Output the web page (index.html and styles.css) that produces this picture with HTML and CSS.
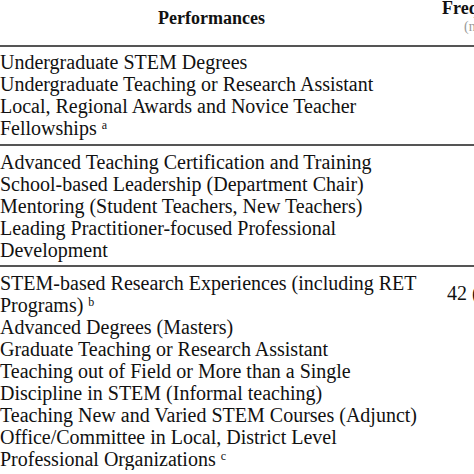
FILE: index.html
```html
<!DOCTYPE html>
<html>
<head>
<meta charset="utf-8">
<link rel="stylesheet" href="styles.css">
</head>
<body>
<div class="table">
  <div class="head">
    <div class="h-perf">Performances</div>
    <div class="h-freq">Frequency<span class="h-sub">(n)</span></div>
  </div>
  <div class="row r1">
    <div class="items">
      <div>Undergraduate STEM Degrees</div>
      <div>Undergraduate Teaching or Research Assistant</div>
      <div>Local, Regional Awards and Novice Teacher</div>
      <div>Fellowships <sup>a</sup></div>
    </div>
    <div class="freq"></div>
  </div>
  <div class="row r2">
    <div class="items">
      <div>Advanced Teaching Certification and Training</div>
      <div>School-based Leadership (Department Chair)</div>
      <div>Mentoring (Student Teachers, New Teachers)</div>
      <div>Leading Practitioner-focused Professional</div>
      <div>Development</div>
    </div>
    <div class="freq"></div>
  </div>
  <div class="row r3">
    <div class="items">
      <div>STEM-based Research Experiences (including RET</div>
      <div>Programs) <sup>b</sup></div>
      <div>Advanced Degrees (Masters)</div>
      <div>Graduate Teaching or Research Assistant</div>
      <div>Teaching out of Field or More than a Single</div>
      <div>Discipline in STEM (Informal teaching)</div>
      <div>Teaching New and Varied STEM Courses (Adjunct)</div>
      <div>Office/Committee in Local, District Level</div>
      <div>Professional Organizations <sup>c</sup></div>
    </div>
    <div class="freq f3">42 (38%)</div>
  </div>
</div>
</body>
</html>
```

FILE: styles.css
```css
html, body {
  margin: 0;
  padding: 0;
  background: #fff;
  overflow: hidden;
  width: 474px;
  height: 474px;
}
.table {
  width: 474px;
  overflow: hidden;
  font-family: "Liberation Serif", "DejaVu Serif", serif;
  color: #111;
}
.head {
  display: grid;
  grid-template-columns: 418px 1fr;
  height: 45px;
  border-bottom: 2px solid #555;
}
.h-perf {
  font-weight: bold;
  font-size: 18px;
  text-align: center;
  padding-top: 8px;
  padding-left: 5px;
}
.h-freq {
  font-weight: bold;
  font-size: 18px;
  margin-top: -2px;
  padding-left: 24px;
  display: flex;
  flex-direction: column;
  white-space: nowrap;
  overflow: hidden;
}
.h-sub {
  font-weight: normal;
  font-size: 14px;
  padding-left: 22px;
  color: #999;
}
.row {
  display: grid;
  grid-template-columns: 418px 1fr;
  border-bottom: 2px solid #555;
}
.items {
  font-size: 20px;
  line-height: 22px;
  white-space: nowrap;
}
.r1 .items { padding: 4px 0 5px; }
.r2 .items { padding: 5px 0 4px; }
.r3 .items { padding: 5px 0 0; }
.row.r3 { border-bottom: none; }
sup {
  font-size: 12px;
  line-height: 0;
  vertical-align: 6px;
}
.freq {
  font-size: 20px;
  line-height: 22px;
  white-space: nowrap;
  overflow: hidden;
}
.f3 {
  padding-top: 15px;
  padding-left: 29px;
}
```
